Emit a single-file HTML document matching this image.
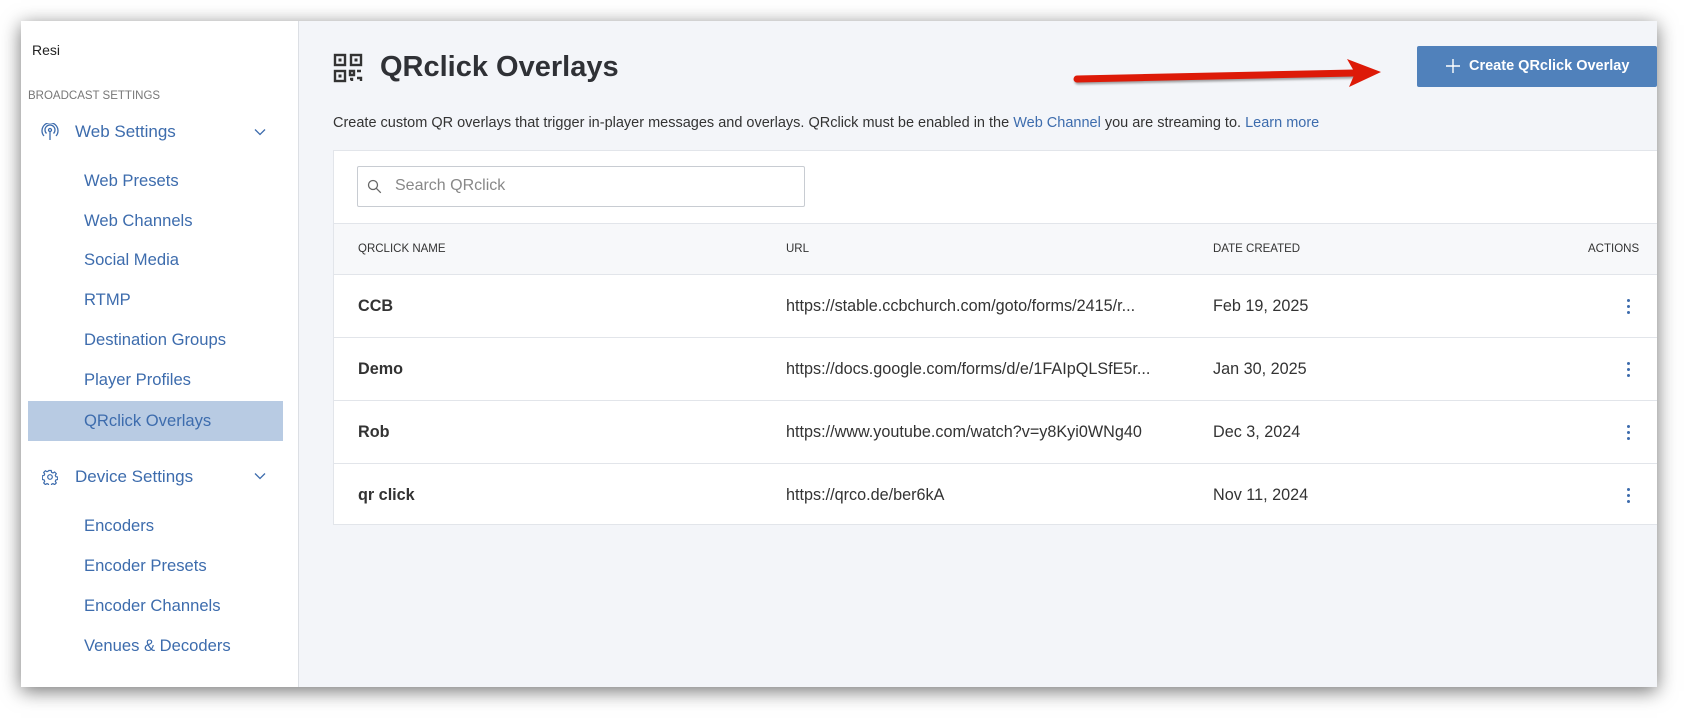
<!DOCTYPE html>
<html><head><meta charset="utf-8"><style>
*{box-sizing:border-box;margin:0;padding:0}
body{width:1688px;height:719px;background:#fff;font-family:"Liberation Sans",sans-serif;position:relative;overflow:hidden}
.win{position:absolute;left:21px;top:21px;width:1636px;height:666px;background:#f3f5f9;box-shadow:0 4px 18px rgba(0,0,0,.55);overflow:hidden}
.side{position:absolute;left:0;top:0;width:278px;height:666px;background:#fff;border-right:1px solid #dcdfe4}
.a{position:absolute;white-space:nowrap}
.blue{color:#3d6cad}
.sub{position:absolute;left:63px;font-size:16.6px;color:#3d6cad}
.main{position:absolute;left:278px;top:0;right:0;bottom:0}
.card{position:absolute;left:34px;top:129px;width:1330px;height:375px;background:#fff;border:1px solid #e2e5ea}
.th{position:absolute;font-size:11.5px;color:#333;top:0;line-height:50px}
.row{position:absolute;left:0;right:0;height:63px;border-top:1px solid #e2e5ea;font-size:16.2px;color:#333}
.row span{position:absolute;line-height:62px;white-space:nowrap}
.dots{position:absolute;left:1293px;top:24px;width:3px}
.dots i{display:block;width:3px;height:3px;border-radius:50%;background:#3d6cad;margin-bottom:3px}
</style></head><body>
<div class="win">
 <div class="side">
  <div class="a" style="left:11px;top:21px;font-size:14px;color:#222">Resi</div>
  <div class="a" style="left:7px;top:69px;font-size:11.5px;color:#777">BROADCAST SETTINGS</div>
  <svg class="a" style="left:20px;top:102px" width="18" height="18" viewBox="0 0 18 18" fill="none" stroke="#3d6cad" stroke-width="1.3"><circle cx="9" cy="7" r="1.5"/><path d="M9 8.5V17M5.5 10.5a5 5 0 1 1 7 0M3 13a8 8 0 1 1 12 0"/></svg>
  <div class="a blue" style="left:54px;top:101px;font-size:17px">Web Settings</div>
  <svg class="a" style="left:233px;top:107px" width="12" height="8" viewBox="0 0 12 8"><path d="M1 1.5l5 5 5-5" fill="none" stroke="#3d6cad" stroke-width="1.3"/></svg>
  <div class="sub" style="top:150px">Web Presets</div>
  <div class="sub" style="top:190px">Web Channels</div>
  <div class="sub" style="top:229px">Social Media</div>
  <div class="sub" style="top:269px">RTMP</div>
  <div class="sub" style="top:309px">Destination Groups</div>
  <div class="sub" style="top:349px">Player Profiles</div>
  <div class="a" style="left:7px;top:380px;width:255px;height:40px;background:#b8cbe3"></div>
  <div class="sub" style="top:390px">QRclick Overlays</div>
  <svg class="a" style="left:21px;top:448px" width="16" height="16" viewBox="0 0 16 16" fill="none" stroke="#3d6cad" stroke-width="1.2"><circle cx="8" cy="8" r="2.3"/><path d="M6.8 1.5h2.4l.4 1.8 1.4.7 1.6-1 1.7 1.7-1 1.6.6 1.4 1.8.4v2.4l-1.8.4-.6 1.4 1 1.6-1.7 1.7-1.6-1-1.4.6-.4 1.8H6.8l-.4-1.8-1.4-.6-1.6 1-1.7-1.7 1-1.6-.6-1.4-1.8-.4V6.8l1.8-.4.6-1.4-1-1.6 1.7-1.7 1.6 1 1.4-.7z"/></svg>
  <div class="a blue" style="left:54px;top:446px;font-size:17px">Device Settings</div>
  <svg class="a" style="left:233px;top:451px" width="12" height="8" viewBox="0 0 12 8"><path d="M1 1.5l5 5 5-5" fill="none" stroke="#3d6cad" stroke-width="1.3"/></svg>
  <div class="sub" style="top:495px">Encoders</div>
  <div class="sub" style="top:535px">Encoder Presets</div>
  <div class="sub" style="top:575px">Encoder Channels</div>
  <div class="sub" style="top:615px">Venues &amp; Decoders</div>
 </div>
 <div class="main">
  <svg class="a" style="left:34px;top:32px" width="30" height="30" viewBox="0 0 30 30" fill="none" stroke="#333" stroke-width="2.4"><rect x="2" y="2" width="10" height="10"/><rect x="18" y="2" width="10" height="10"/><rect x="2" y="18" width="10" height="10"/><rect x="5.5" y="5.5" width="3" height="3" fill="#333" stroke="none"/><rect x="21.5" y="5.5" width="3" height="3" fill="#333" stroke="none"/><rect x="5.5" y="21.5" width="3" height="3" fill="#333" stroke="none"/><path d="M17 18h4v4h-4zM24 18h4M24 25h4v3M17 26h2v2"/></svg>
  <div class="a" style="left:81px;top:30px;font-size:29px;font-weight:bold;color:#2f3136">QRclick Overlays</div>
  <div class="a" style="left:1118px;top:25px;width:240px;height:41px;background:#5081bb;border-radius:2px;color:#fff;font-size:14.5px;font-weight:bold;line-height:41px;padding-left:52px">Create QRclick Overlay</div>
  <svg class="a" style="left:1146px;top:37px" width="16" height="16" viewBox="0 0 16 16"><path d="M8 1v14M1 8h14" stroke="#fff" stroke-width="1.4"/></svg>
  <svg class="a" style="left:770px;top:36px" width="330" height="40" viewBox="0 0 330 40"><path d="M8 22 L285 16" stroke="#dd1a08" stroke-width="7" stroke-linecap="round" fill="none" style="filter:drop-shadow(1px 2px 1px rgba(0,0,0,.35))"/><path d="M278 2 L312 15 L280 30 L286 16 Z" fill="#dd1a08"/></svg>
  <div class="a" style="left:34px;top:94px;font-size:14.5px;color:#333">Create custom QR overlays that trigger in-player messages and overlays. QRclick must be enabled in the <span class="blue">Web Channel</span> you are streaming to. <span class="blue">Learn more</span></div>
  <div class="card">
   <div class="a" style="left:23px;top:15px;width:448px;height:41px;border:1px solid #c8ccd2;border-radius:2px"></div>
   <svg class="a" style="left:33px;top:28px" width="15" height="15" viewBox="0 0 15 15" fill="none" stroke="#666" stroke-width="1.3"><circle cx="6" cy="6" r="4.5"/><path d="M9.3 9.3l4.5 4.5"/></svg>
   <div class="a" style="left:61px;top:26px;font-size:16px;color:#888">Search QRclick</div>
   <div class="a" style="left:0;top:72px;right:0;height:51px;background:#f7f8fa;border-top:1px solid #e2e5ea">
    <div class="th" style="left:24px">QRCLICK NAME</div>
    <div class="th" style="left:452px">URL</div>
    <div class="th" style="left:879px">DATE CREATED</div>
    <div class="th" style="left:1254px">ACTIONS</div>
   </div>
   <div class="row" style="top:123px"><span style="left:24px;font-weight:bold">CCB</span><span style="left:452px">https://stable.ccbchurch.com/goto/forms/2415/r...</span><span style="left:879px">Feb 19, 2025</span><div class="dots"><i></i><i></i><i></i></div></div>
   <div class="row" style="top:186px"><span style="left:24px;font-weight:bold">Demo</span><span style="left:452px">https://docs.google.com/forms/d/e/1FAIpQLSfE5r...</span><span style="left:879px">Jan 30, 2025</span><div class="dots"><i></i><i></i><i></i></div></div>
   <div class="row" style="top:249px"><span style="left:24px;font-weight:bold">Rob</span><span style="left:452px">https://www.youtube.com/watch?v=y8Kyi0WNg40</span><span style="left:879px">Dec 3, 2024</span><div class="dots"><i></i><i></i><i></i></div></div>
   <div class="row" style="top:312px"><span style="left:24px;font-weight:bold">qr click</span><span style="left:452px">https://qrco.de/ber6kA</span><span style="left:879px">Nov 11, 2024</span><div class="dots"><i></i><i></i><i></i></div></div>
  </div>
 </div>
</div>
</body></html>
